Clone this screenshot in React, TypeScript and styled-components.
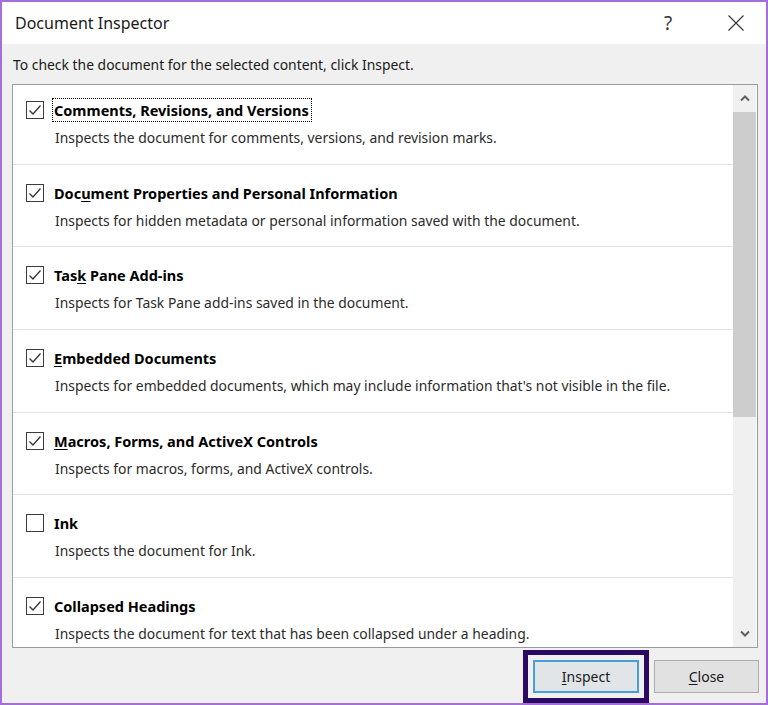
import React from "react";
import styled, { createGlobalStyle } from "styled-components";

interface Check {
  title: React.ReactNode;
  text: string;
  checked: boolean;
  focused?: boolean;
}

const GlobalStyle = createGlobalStyle`
  html, body {
    margin: 0;
    padding: 0;
    background: #f0f0f0;
  }
  body {
    font-family: "Noto Sans", "Open Sans", sans-serif;
  }
`;

const Window = styled("div")({
  boxSizing: "border-box",
  width: "768px",
  height: "705px",
  border: "2px solid #a46fd9",
  background: "#f0f0f0",
  display: "flex",
  flexDirection: "column",
  overflow: "hidden",
});

const TitleBar = styled("header")({
  height: "42px",
  flexShrink: 0,
  background: "#ffffff",
  display: "flex",
  alignItems: "center",
  paddingLeft: "13px",
  paddingRight: "7px",
});

const Title = styled("h1")({
  flex: 1,
  margin: 0,
  fontSize: "16px",
  fontWeight: 400,
  color: "#1a1a1a",
});

const CaptionButton = styled("div")<{ $wide?: boolean }>((p) => ({
  width: p.$wide ? "46px" : "30px",
  marginLeft: p.$wide ? "30px" : "0",
  height: "42px",
  display: "flex",
  alignItems: "center",
  justifyContent: "center",
  fontSize: "19px",
  color: "#333",
}));

const Body = styled("main")({
  flex: 1,
  display: "flex",
  flexDirection: "column",
  padding: "11px 8px 0 10px",
});

const Intro = styled("p")({
  margin: 0,
  fontSize: "13.9px",
  lineHeight: "20px",
  color: "#1a1a1a",
  paddingLeft: "1px",
});

const ListBox = styled("div")({
  marginTop: "9px",
  height: "564px",
  boxSizing: "border-box",
  border: "1px solid #9a9a9a",
  background: "#ffffff",
  display: "flex",
  overflow: "hidden",
});

// the list is scrolled a few pixels down in the picture
const Items = styled("ul")({
  flex: 1,
  margin: "-3px 0 0 0",
  padding: 0,
  listStyle: "none",
});

const Item = styled("li")({
  height: "82.67px",
  boxSizing: "border-box",
  borderBottom: "1px solid #e3e3e3",
  display: "grid",
  gridTemplateColumns: "18px 1fr",
  columnGap: "11px",
  rowGap: "7px",
  alignContent: "start",
  padding: "17px 0 0 13px",
});

const Box = styled("span")({
  width: "18px",
  height: "18px",
  alignSelf: "center",
  boxSizing: "border-box",
  border: "1px solid #3c3c3c",
  display: "flex",
  alignItems: "center",
  justifyContent: "center",
});

const ItemTitle = styled("span")<{ $focused?: boolean }>((p) => ({
  justifySelf: "start",
  fontSize: "14.5px",
  fontWeight: 700,
  lineHeight: "20px",
  color: "#000",
  margin: "0 0 0 -2px",
  padding: "1px 2px 1px 1px",
  outline: p.$focused ? "1px dotted #000" : "none",
}));

const ItemText = styled("span")({
  gridColumn: "2",
  fontSize: "13.9px",
  lineHeight: "20px",
  color: "#2b2b2b",
});

const ScrollBar = styled("div")({
  width: "23px",
  background: "#f0f0f0",
  display: "flex",
  flexDirection: "column",
  marginRight: "1px",
});

const Arrow = styled("div")({
  height: "27px",
  display: "flex",
  alignItems: "center",
  justifyContent: "center",
});

const Track = styled("div")({
  flex: 1,
  display: "flex",
  flexDirection: "column",
});

const Thumb = styled("div")({
  height: "305px",
  background: "#cdcdcd",
});

const Footer = styled("footer")({
  display: "flex",
  justifyContent: "flex-end",
  gap: "15px",
  marginTop: "12px",
});

const Button = styled("button")<{ $default?: boolean }>((p) => ({
  width: p.$default ? "106px" : "105px",
  height: "33px",
  boxSizing: "border-box",
  fontFamily: "inherit",
  fontSize: "14px",
  color: "#1a1a1a",
  background: p.$default ? "#e1e5e8" : "#e1e1e1",
  border: p.$default ? "2px solid #4a9fd9" : "1px solid #adadad",
  outline: p.$default ? "5px solid #2b0b62" : "none",
  outlineOffset: "5px",
  marginRight: p.$default ? "0" : "-1px",
  padding: 0,
}));

const Key = styled("u")({
  textUnderlineOffset: "2px",
});

const Tick = () => (
  <svg width="14" height="12" viewBox="0 0 14 12">
    <path d="M1.5 6.5 L5 10 L12.5 1.5" fill="none" stroke="#333" strokeWidth="1.3" />
  </svg>
);

const Chevron = ({ down }: { down?: boolean }) => (
  <svg width="10" height="7" viewBox="0 0 10 7">
    <path
      d={down ? "M1 1.5 L5 5.5 L9 1.5" : "M1 5.5 L5 1.5 L9 5.5"}
      fill="none"
      stroke="#606060"
      strokeWidth="2"
    />
  </svg>
);

const checks: Check[] = [
  {
    title: "Comments, Revisions, and Versions",
    text: "Inspects the document for comments, versions, and revision marks.",
    checked: true,
    focused: true,
  },
  {
    title: (
      <>
        Doc<Key>u</Key>ment Properties and Personal Information
      </>
    ),
    text: "Inspects for hidden metadata or personal information saved with the document.",
    checked: true,
  },
  {
    title: (
      <>
        Tas<Key>k</Key> Pane Add-ins
      </>
    ),
    text: "Inspects for Task Pane add-ins saved in the document.",
    checked: true,
  },
  {
    title: (
      <>
        <Key>E</Key>mbedded Documents
      </>
    ),
    text: "Inspects for embedded documents, which may include information that's not visible in the file.",
    checked: true,
  },
  {
    title: (
      <>
        <Key>M</Key>acros, Forms, and ActiveX Controls
      </>
    ),
    text: "Inspects for macros, forms, and ActiveX controls.",
    checked: true,
  },
  {
    title: "Ink",
    text: "Inspects the document for Ink.",
    checked: false,
  },
  {
    title: "Collapsed Headings",
    text: "Inspects the document for text that has been collapsed under a heading.",
    checked: true,
  },
];

const App: React.FC = () => {
  return (
    <>
      <GlobalStyle />
      <Window>
        <TitleBar>
          <Title>Document Inspector</Title>
          <CaptionButton>?</CaptionButton>
          <CaptionButton $wide>
            <svg width="16" height="16" viewBox="0 0 16 16">
              <path d="M0.5 0.5 L15.5 15.5 M15.5 0.5 L0.5 15.5" stroke="#333" strokeWidth="1.1" />
            </svg>
          </CaptionButton>
        </TitleBar>
        <Body>
          <Intro>To check the document for the selected content, click Inspect.</Intro>
          <ListBox>
            <Items>
              {checks.map((c, i) => (
                <Item key={i}>
                  <Box>{c.checked && <Tick />}</Box>
                  <ItemTitle $focused={c.focused}>{c.title}</ItemTitle>
                  <ItemText>{c.text}</ItemText>
                </Item>
              ))}
            </Items>
            <ScrollBar>
              <Arrow>
                <Chevron />
              </Arrow>
              <Track>
                <Thumb />
              </Track>
              <Arrow>
                <Chevron down />
              </Arrow>
            </ScrollBar>
          </ListBox>
          <Footer>
            <Button $default>
              <Key>I</Key>nspect
            </Button>
            <Button>
              <Key>C</Key>lose
            </Button>
          </Footer>
        </Body>
      </Window>
    </>
  );
};

export default App;
